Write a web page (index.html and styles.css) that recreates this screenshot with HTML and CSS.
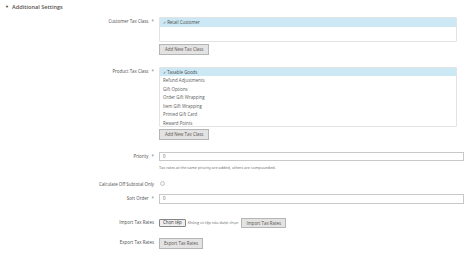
FILE: index.html
```html
<!DOCTYPE html>
<html>
<head>
<meta charset="utf-8">
<link rel="stylesheet" href="styles.css">
</head>
<body>
<div class="page">
  <div class="section-title"><span class="arrow">&#9660;</span>Additional Settings</div>

  <div class="field f-customer">
    <div class="label">Customer Tax Class <span class="req">*</span></div>
    <div class="control">
      <div class="multiselect ms-small">
        <div class="opt sel">&#10003; Retail Customer</div>
      </div>
      <div class="btn">Add New Tax Class</div>
    </div>
  </div>

  <div class="field f-product">
    <div class="label">Product Tax Class <span class="req">*</span></div>
    <div class="control">
      <div class="multiselect ms-large">
        <div class="opt sel">&#10003; Taxable Goods</div>
        <div class="opt">Refund Adjustments</div>
        <div class="opt">Gift Options</div>
        <div class="opt">Order Gift Wrapping</div>
        <div class="opt">Item Gift Wrapping</div>
        <div class="opt">Printed Gift Card</div>
        <div class="opt">Reward Points</div>
      </div>
      <div class="btn">Add New Tax Class</div>
    </div>
  </div>

  <div class="field f-priority">
    <div class="label">Priority <span class="req">*</span></div>
    <div class="control">
      <div class="input">0</div>
      <div class="note">Tax rates at the same priority are added, others are compounded.</div>
    </div>
  </div>

  <div class="field f-check">
    <div class="label">Calculate Off Subtotal Only</div>
    <div class="control">
      <div class="checkbox"></div>
    </div>
  </div>

  <div class="field f-sort">
    <div class="label">Sort Order <span class="req">*</span></div>
    <div class="control">
      <div class="input">0</div>
    </div>
  </div>

  <div class="field f-import">
    <div class="label">Import Tax Rates</div>
    <div class="control row">
      <div class="file-btn">Chọn tệp</div>
      <div class="file-text">Không có tệp nào được chọn</div>
      <div class="btn">Import Tax Rates</div>
    </div>
  </div>

  <div class="field f-export">
    <div class="label">Export Tax Rates</div>
    <div class="control">
      <div class="btn">Export Tax Rates</div>
    </div>
  </div>
</div>
</body>
</html>
```
FILE: styles.css
```css
html, body {
  margin: 0;
  padding: 0;
  background: #ffffff;
}
body {
  font-family: "Open Sans", "Noto Sans", sans-serif;
  color: #4d4d4d;
  font-size: 4.4px;
}
.page {
  width: 474px;
  height: 258px;
  overflow: hidden;
}
.section-title {
  font-size: 5.6px;
  font-weight: 600;
  color: #5a524c;
  padding: 4px 0 0 5px;
  height: 9px;
  line-height: 6px;
}
.arrow {
  font-size: 4px;
  display: inline-block;
  margin-right: 3px;
  vertical-align: 1px;
  color: #41362f;
}
.field {
  display: grid;
  grid-template-columns: 159px 1fr;
  margin-right: 10px;
}
.label {
  text-align: right;
  padding-right: 5px;
  line-height: 9px;
  white-space: nowrap;
}
.req {
  color: #777;
  margin-left: 2px;
}
.control {
  display: flex;
  flex-direction: column;
  align-items: flex-start;
}
.control.row {
  flex-direction: row;
  align-items: center;
}
.f-customer { margin-top: 4px; }
.f-product { margin-top: 12px; }
.f-priority { margin-top: 12px; }
.f-check { margin-top: 8px; }
.f-sort { margin-top: 6px; }
.f-import { margin-top: 14px; }
.f-export { margin-top: 10px; }

.f-check .label { line-height: 7px; padding-top: 2px; }

.multiselect {
  width: 298px;
  box-sizing: border-box;
  border: 1px solid #e3e3e3;
  border-radius: 1px;
  background: #fff;
  overflow: hidden;
}
.ms-small { height: 25px; }
.ms-large { height: 60px; }
.opt {
  height: 8.5px;
  line-height: 8.5px;
  padding-left: 3px;
  color: #5a5a5a;
  white-space: nowrap;
}
.opt.sel {
  background: #cce8f4;
  color: #4a4a4a;
}
.btn {
  box-sizing: border-box;
  height: 10.5px;
  line-height: 9px;
  padding: 0 5px;
  margin-top: 2px;
  background: #e3e3e3;
  border: 1px solid #b5b5b5;
  color: #5a524c;
  white-space: nowrap;
  font-size: 4.4px;
}
.ms-large + .btn { margin-top: 2px; height: 11px; line-height: 9.5px; }
.input {
  width: 100%;
  box-sizing: border-box;
  height: 9.5px;
  line-height: 7.5px;
  border: 1px solid #c8c8c8;
  background: #fff;
  padding-left: 3px;
  color: #666;
}
.note {
  font-size: 3.8px;
  color: #666;
  margin-top: 4px;
  line-height: 6px;
}
.checkbox {
  width: 3px;
  height: 3px;
  border: 1px solid #c8c8c8;
  border-radius: 50%;
  margin: 2px 0 0 1px;
  background: #f4f4f4;
}
.file-btn {
  box-sizing: border-box;
  height: 7.5px;
  line-height: 5.5px;
  padding: 0 3px;
  border: 1px solid #858585;
  border-radius: 1px;
  background: #efefef;
  color: #333;
  font-size: 4.4px;
  white-space: nowrap;
}
.file-text {
  font-size: 3.8px;
  color: #666;
  margin: 0 3px 0 2px;
  white-space: nowrap;
}
.control.row .btn {
  margin-top: 0;
  padding: 0 4px;
}
.f-import .btn { width: 45px; text-align: center; padding: 0; }
.f-export .btn { margin-top: 0; width: 44px; text-align: center; padding: 0; }
```
